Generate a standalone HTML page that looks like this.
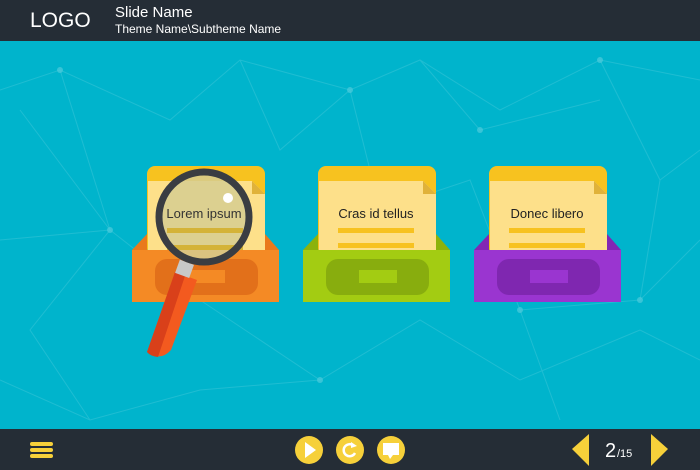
<!DOCTYPE html>
<html><head><style>
body{margin:0;width:700px;height:470px;overflow:hidden;font-family:"Liberation Sans",sans-serif;background:#00b4cc;position:relative}
.top{position:absolute;left:0;top:0;width:700px;height:41px;background:#252d36;color:#fff}
.bot{position:absolute;left:0;top:429px;width:700px;height:41px;background:#252d36}
</style></head><body>
<svg width="700" height="470" style="position:absolute;left:0;top:0">
<g stroke="#3fc6d8" stroke-width="1" opacity="0.5" fill="none">
<path d="M0 90 L60 70 L170 120 L240 60 L350 90 L420 60 L500 110 L600 60 L700 80"/>
<path d="M20 110 L110 230 L30 330 L90 420 M60 70 L110 230 L200 300 L320 380 L420 320 L520 380 L640 330 L700 360"/>
<path d="M350 90 L380 210 L470 180 L520 310 L640 300 L660 180 L700 150 M600 60 L660 180 M420 60 L480 130 L600 100"/>
<path d="M0 240 L110 230 M0 380 L90 420 L200 390 L320 380 M520 310 L560 420 M640 300 L700 240 M240 60 L280 150 L350 90"/>
</g>
<g fill="#4fcadb" opacity="0.7"><circle cx="60" cy="70" r="3"/><circle cx="350" cy="90" r="3"/><circle cx="110" cy="230" r="3"/><circle cx="520" cy="310" r="3"/><circle cx="640" cy="300" r="3"/><circle cx="600" cy="60" r="3"/><circle cx="320" cy="380" r="3"/><circle cx="480" cy="130" r="3"/></g>

<g>
<rect x="147" y="166" width="118" height="90" rx="8" fill="#f7c21f"/>
<path d="M148 181 H252 L265 194 V252 H148Z" fill="#fde08a"/>
<path d="M252 181 L265 194 H252Z" fill="#e0b23a"/>
<path d="M132 250 L147 234 V252 H265 V234 L279 250Z" fill="#e9791c"/>
<rect x="132" y="250" width="147" height="52" fill="#f48a25"/>
<rect x="155" y="259" width="103" height="36" rx="12" fill="#e2701a"/>
<rect x="179" y="270" width="46" height="13" fill="#f48a25"/>
</g>
<g>
<rect x="318" y="166" width="118" height="90" rx="8" fill="#f7c21f"/>
<path d="M319 181 H423 L436 194 V252 H319Z" fill="#fde08a"/>
<path d="M423 181 L436 194 H423Z" fill="#e0b23a"/>
<rect x="338" y="228" width="76" height="5" fill="#f7c21f"/><rect x="338" y="243" width="76" height="5" fill="#f7c21f"/>
<path d="M303 250 L318 234 V252 H436 V234 L450 250Z" fill="#8cb20c"/>
<rect x="303" y="250" width="147" height="52" fill="#a3cc12"/>
<rect x="326" y="259" width="103" height="36" rx="12" fill="#88ad0e"/>
<rect x="359" y="270" width="38" height="13" fill="#a3cc12"/>
<text x="376" y="218" font-size="13" text-anchor="middle" fill="#222">Cras id tellus</text>
</g>
<g>
<rect x="489" y="166" width="118" height="90" rx="8" fill="#f7c21f"/>
<path d="M490 181 H594 L607 194 V252 H490Z" fill="#fde08a"/>
<path d="M594 181 L607 194 H594Z" fill="#e0b23a"/>
<rect x="509" y="228" width="76" height="5" fill="#f7c21f"/><rect x="509" y="243" width="76" height="5" fill="#f7c21f"/>
<path d="M474 250 L489 234 V252 H607 V234 L621 250Z" fill="#8227b4"/>
<rect x="474" y="250" width="147" height="52" fill="#9a35d0"/>
<rect x="497" y="259" width="103" height="36" rx="12" fill="#7f27b0"/>
<rect x="530" y="270" width="38" height="13" fill="#9a35d0"/>
<text x="547" y="218" font-size="13" text-anchor="middle" fill="#222">Donec libero</text>
</g>
<!-- magnifier -->
<path d="M175 272 L197 280 L171 350 Q160 362 147 352 Z" fill="#f35a1f"/>
<path d="M175 272 L185 276 L158 357 Q150 356 147 352Z" fill="#d9401a"/>
<rect x="177" y="262" width="15" height="14" fill="#c8c8c8" transform="rotate(20 185 269)"/>
<circle cx="204" cy="217" r="45" fill="#d6cd90" opacity="0.85"/>
<rect x="167" y="228" width="76" height="5" fill="#d4b338"/><rect x="167" y="245" width="76" height="5" fill="#d4b338"/>
<text x="204" y="218" font-size="13" text-anchor="middle" fill="#333">Lorem ipsum</text>
<circle cx="204" cy="217" r="45" fill="none" stroke="#3a3d42" stroke-width="7"/>
<circle cx="228" cy="198" r="5" fill="#fff"/>
</svg>
<div class="top"><div style="position:absolute;left:30px;top:9px;font-size:21px">LOGO</div>
<div style="position:absolute;left:115px;top:4px;font-size:15px">Slide Name</div>
<div style="position:absolute;left:115px;top:22px;font-size:12px">Theme Name\Subtheme Name</div></div>
<div class="bot">
<svg width="700" height="41" style="position:absolute;left:0;top:0">
<g fill="#f6d03a"><rect x="30" y="13" width="23" height="4" rx="2"/><rect x="30" y="19" width="23" height="4" rx="2"/><rect x="30" y="25" width="23" height="4" rx="2"/>
<circle cx="309" cy="21" r="14"/><circle cx="350" cy="21" r="14"/><circle cx="391" cy="21" r="14"/>
<path d="M572 20 L589 5 V37Z"/><path d="M668 20 L651 5 V37Z"/></g>
<path d="M305 13 L316 21 L305 29Z" fill="#fff"/>
<path d="M354 17 A6 6 0 1 0 355 24" stroke="#fff" stroke-width="2.5" fill="none"/><path d="M351 13 L357 17 L351 19Z" fill="#fff"/>
<path d="M383 14 H399 V26 H393 L390 30 L388 26 H383Z" fill="#fff"/>
<text x="605" y="28" fill="#fff" font-size="20">2</text><text x="617" y="28" fill="#fff" font-size="11">/15</text>
</svg></div>
</body></html>
